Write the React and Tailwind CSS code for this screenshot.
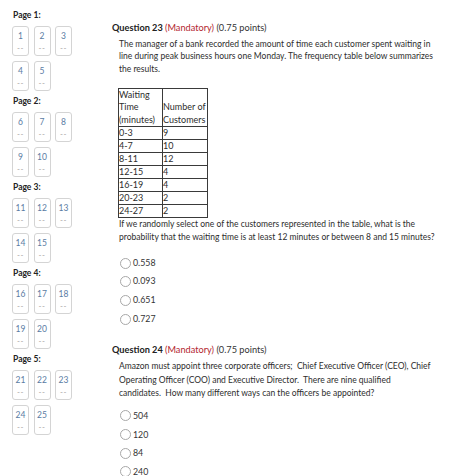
import React from "react";

const pages = [
  [[1, 2, 3], [4, 5]],
  [[6, 7, 8], [9, 10]],
  [[11, 12, 13], [14, 15]],
  [[16, 17, 18], [19, 20]],
  [[21, 22, 23], [24, 25]],
];

function Box({ n }) {
  return (
    <div className="w-[17px] h-[30px] border border-[#d4d4d4] rounded-[3px] flex flex-col items-center bg-white">
      <div className="text-[8.5px] leading-[10px] mt-[4px] text-[#5a7ca3]">{n}</div>
      <div className="text-[8px] leading-[8px] mt-[3px] text-[#a0a0a0] tracking-[0.5px]">--</div>
    </div>
  );
}

function Radio({ label }) {
  return (
    <div className="flex items-center h-[18.7px]">
      <div className="w-[11px] h-[11px] rounded-full border border-[#a8a8a8] bg-white mr-[2px] ml-[1px]" />
      <span className="text-[8.8px] text-[#333]">{label}</span>
    </div>
  );
}

const rows = [
  ["0-3", "9"],
  ["4-7", "10"],
  ["8-11", "12"],
  ["12-15", "4"],
  ["16-19", "4"],
  ["20-23", "2"],
  ["24-27", "2"],
];

function Heading({ n }) {
  return (
    <div className="text-[9.2px] leading-[13px]">
      <span className="font-bold text-[#222]">Question {n} </span>
      <span className="text-[#b3262f]">(Mandatory)</span>
      <span className="text-[#333]"> (0.75 points)</span>
    </div>
  );
}

export default function App() {
  return (
    <div
      className="w-[474px] h-[476px] bg-white flex overflow-hidden text-[#2d2d2d]"
      style={{ fontFamily: "Lato, 'Open Sans', sans-serif" }}
    >
      <div className="w-[100px] shrink-0 pl-[12px] pt-[10px] flex flex-col gap-[5px]">
        {pages.map((pg, i) => (
          <div key={i} className="flex flex-col">
            <div className="text-[8.5px] leading-[10px] font-bold text-[#222] pl-[1px]">Page {i + 1}:</div>
            <div className="flex flex-col gap-[5px] mt-[6px]">
              {pg.map((r, j) => (
                <div key={j} className="flex gap-[4.5px]">
                  {r.map((n) => (
                    <Box key={n} n={n} />
                  ))}
                </div>
              ))}
            </div>
          </div>
        ))}
      </div>
      <div className="flex-1 pl-[12px] pt-[20.5px]">
        <Heading n={23} />
        <div className="pl-[7px] mt-[4px] text-[8.5px] leading-[12.8px] text-[#2d2d2d] pr-[4px]">
          <p>
            The manager of a bank recorded the amount of time each customer spent waiting in
            <br />
            line during peak business hours one Monday. The frequency table below summarizes
            <br />
            the results.
          </p>
          <table className="mt-[12px] -ml-[1px] border-collapse border-[1.5px] border-[#3a3a3a] text-[9px] leading-[12.4px] table-fixed">
            <thead>
              <tr>
                <th className="border-[1.5px] border-[#3a3a3a] font-normal text-left align-top w-[44px] p-0 whitespace-nowrap">
                  Waiting
                  <br />
                  Time
                  <br />
                  (minutes)
                </th>
                <th className="border-[1.5px] border-[#3a3a3a] font-normal text-left align-bottom w-[45px] p-0 whitespace-nowrap">
                  Number of
                  <br />
                  Customers
                </th>
              </tr>
            </thead>
            <tbody>
              {rows.map(([a, b]) => (
                <tr key={a} className="h-[13px]">
                  <td className="border-[1.5px] border-[#3a3a3a] p-0 leading-[11.5px]">{a}</td>
                  <td className="border-[1.5px] border-[#3a3a3a] p-0 leading-[11.5px]">{b}</td>
                </tr>
              ))}
            </tbody>
          </table>
          <p className="mt-0">
            If we randomly select one of the customers represented in the table, what is the
            <br />
            probability that the waiting time is at least 12 minutes or between 8 and 15 minutes?
          </p>
          <div className="mt-[10px] flex flex-col">
            <Radio label="0.558" />
            <Radio label="0.093" />
            <Radio label="0.651" />
            <Radio label="0.727" />
          </div>
        </div>
        <div className="mt-[15px]">
          <Heading n={24} />
        </div>
        <div className="pl-[7px] mt-[4px] text-[8.5px] leading-[13.5px] text-[#2d2d2d] pr-[4px]">
          <p className="whitespace-pre-wrap">
            {"Amazon must appoint three corporate officers;  Chief Executive Officer (CEO), Chief"}
            <br />
            {"Operating Officer (COO) and Executive Director.  There are nine qualified"}
            <br />
            {"candidates.  How many different ways can the officers be appointed?"}
          </p>
          <div className="mt-[5.5px] flex flex-col">
            <Radio label="504" />
            <Radio label="120" />
            <Radio label="84" />
            <Radio label="240" />
          </div>
        </div>
      </div>
    </div>
  );
}
